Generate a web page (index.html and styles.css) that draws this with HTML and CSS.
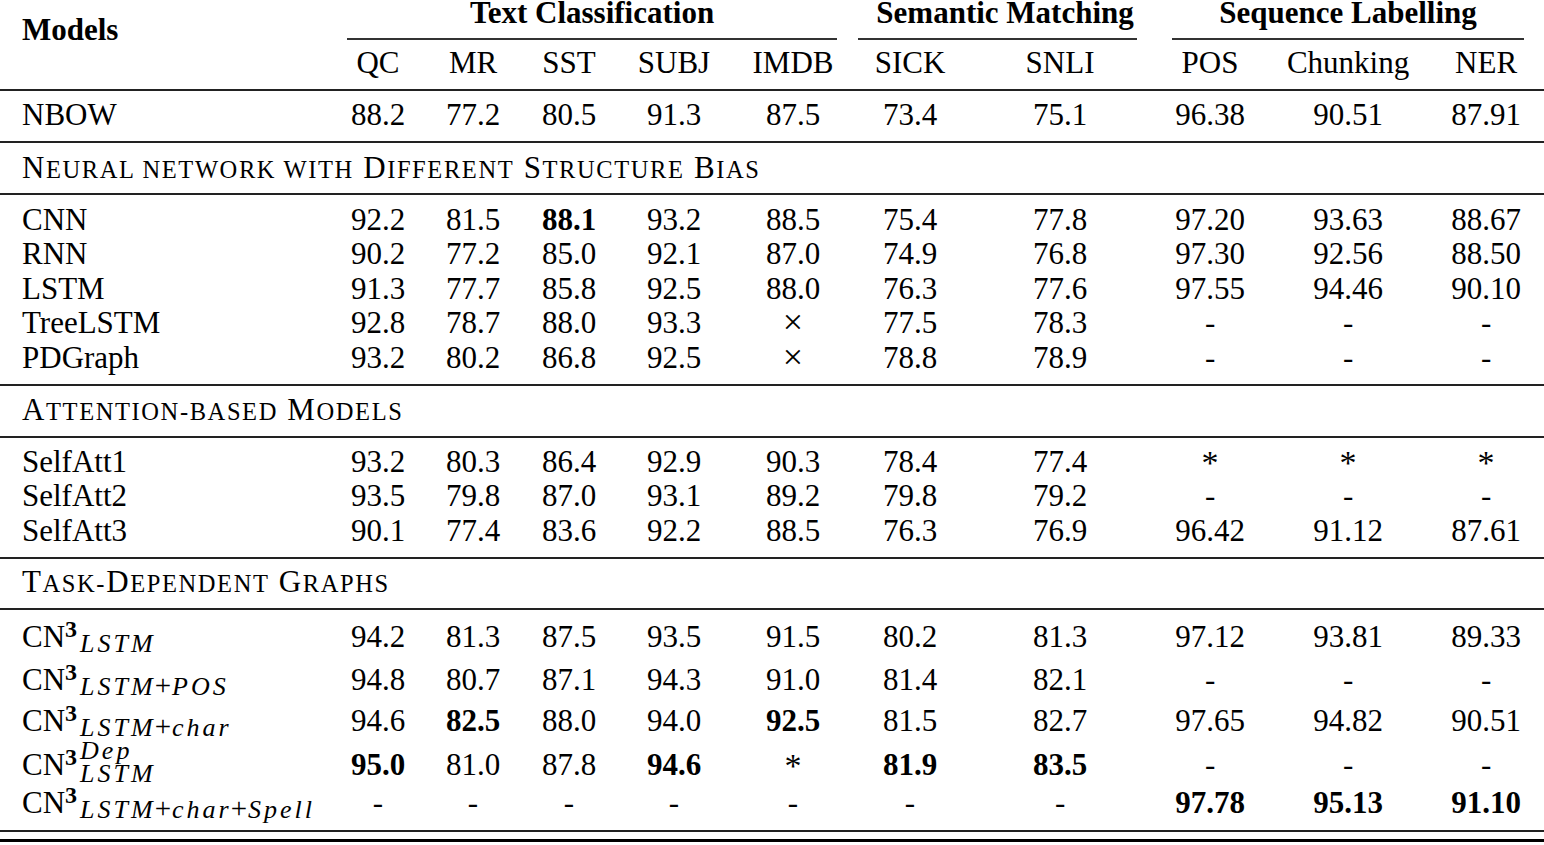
FILE: index.html
```html
<!DOCTYPE html>
<html>
<head>
<meta charset="utf-8">
<title>Results</title>
<link rel="stylesheet" href="styles.css">
</head>
<body>
<table class="results">
  <colgroup>
    <col class="c-model"><col class="c-qc"><col class="c-mr"><col class="c-sst"><col class="c-subj"><col class="c-imdb">
    <col class="c-sick"><col class="c-snli"><col class="c-pos"><col class="c-chunk"><col class="c-ner">
  </colgroup>
  <thead>
    <tr class="groups">
      <th rowspan="2" class="models">Models</th>
      <th colspan="5"><div class="grp grp-tc">Text Classification</div></th>
      <th colspan="2"><div class="grp grp-sm">Semantic Matching</div></th>
      <th colspan="3"><div class="grp grp-sl">Sequence Labelling</div></th>
    </tr>
    <tr class="cols">
      <th>QC</th><th>MR</th><th>SST</th><th>SUBJ</th><th>IMDB</th><th>SICK</th><th>SNLI</th><th>POS</th><th>Chunking</th><th class="last">NER</th>
    </tr>
  </thead>
  <tbody>
    <tr class="single">
      <td class="name">NBOW</td><td>88.2</td><td>77.2</td><td>80.5</td><td>91.3</td><td>87.5</td><td>73.4</td><td>75.1</td><td>96.38</td><td>90.51</td><td class="last">87.91</td>
    </tr>
    <tr class="section sec-a"><td colspan="11">N<span class="sc">eural network with</span> D<span class="sc">ifferent</span> S<span class="sc">tructure</span> B<span class="sc">ias</span></td></tr>
    <tr class="data tall first-a">
      <td class="name">CNN</td><td>92.2</td><td>81.5</td><td><b class="best">88.1</b></td><td>93.2</td><td>88.5</td><td>75.4</td><td>77.8</td><td>97.20</td><td>93.63</td><td class="last">88.67</td>
    </tr>
    <tr class="data">
      <td class="name">RNN</td><td>90.2</td><td>77.2</td><td>85.0</td><td>92.1</td><td>87.0</td><td>74.9</td><td>76.8</td><td>97.30</td><td>92.56</td><td class="last">88.50</td>
    </tr>
    <tr class="data tall">
      <td class="name">LSTM</td><td>91.3</td><td>77.7</td><td>85.8</td><td>92.5</td><td>88.0</td><td>76.3</td><td>77.6</td><td>97.55</td><td>94.46</td><td class="last">90.10</td>
    </tr>
    <tr class="data">
      <td class="name">TreeLSTM</td><td>92.8</td><td>78.7</td><td>88.0</td><td>93.3</td><td><span class="cross">&times;</span></td><td>77.5</td><td>78.3</td><td>-</td><td>-</td><td class="last">-</td>
    </tr>
    <tr class="data tall last-a">
      <td class="name">PDGraph</td><td>93.2</td><td>80.2</td><td>86.8</td><td>92.5</td><td><span class="cross">&times;</span></td><td>78.8</td><td>78.9</td><td>-</td><td>-</td><td class="last">-</td>
    </tr>
    <tr class="section sec-b"><td colspan="11">A<span class="sc">ttention-based</span> M<span class="sc">odels</span></td></tr>
    <tr class="data tall first-b">
      <td class="name">SelfAtt1</td><td>93.2</td><td>80.3</td><td>86.4</td><td>92.9</td><td>90.3</td><td>78.4</td><td>77.4</td><td><span class="ast">*</span></td><td><span class="ast">*</span></td><td class="last"><span class="ast">*</span></td>
    </tr>
    <tr class="data">
      <td class="name">SelfAtt2</td><td>93.5</td><td>79.8</td><td>87.0</td><td>93.1</td><td>89.2</td><td>79.8</td><td>79.2</td><td>-</td><td>-</td><td class="last">-</td>
    </tr>
    <tr class="data tall last-b">
      <td class="name">SelfAtt3</td><td>90.1</td><td>77.4</td><td>83.6</td><td>92.2</td><td>88.5</td><td>76.3</td><td>76.9</td><td>96.42</td><td>91.12</td><td class="last">87.61</td>
    </tr>
    <tr class="section sec-c"><td colspan="11">T<span class="sc">ask-</span>D<span class="sc">ependent</span> G<span class="sc">raphs</span></td></tr>
    <tr class="data cn1">
      <td class="name">CN<span class="cn-sup">3</span><span class="cn-sub">LSTM</span></td><td>94.2</td><td>81.3</td><td>87.5</td><td>93.5</td><td>91.5</td><td>80.2</td><td>81.3</td><td>97.12</td><td>93.81</td><td class="last">89.33</td>
    </tr>
    <tr class="data cn2">
      <td class="name">CN<span class="cn-sup">3</span><span class="cn-sub">LSTM<span class="op">+</span>POS</span></td><td>94.8</td><td>80.7</td><td>87.1</td><td>94.3</td><td>91.0</td><td>81.4</td><td>82.1</td><td>-</td><td>-</td><td class="last">-</td>
    </tr>
    <tr class="data cn3">
      <td class="name">CN<span class="cn-sup">3</span><span class="cn-sub">LSTM<span class="op">+</span>char</span></td><td>94.6</td><td><b class="best">82.5</b></td><td>88.0</td><td>94.0</td><td><b class="best">92.5</b></td><td>81.5</td><td>82.7</td><td>97.65</td><td>94.82</td><td class="last">90.51</td>
    </tr>
    <tr class="data cn4">
      <td class="name">CN<span class="cn-sup">3</span><span class="cn-stack"><span class="cn-line">Dep</span><span class="cn-line">LSTM</span></span></td><td><b class="best">95.0</b></td><td>81.0</td><td>87.8</td><td><b class="best">94.6</b></td><td><span class="ast">*</span></td><td><b class="best">81.9</b></td><td><b class="best">83.5</b></td><td>-</td><td>-</td><td class="last">-</td>
    </tr>
    <tr class="data cn5">
      <td class="name">CN<span class="cn-sup">3</span><span class="cn-sub">LSTM<span class="op">+</span>char<span class="op">+</span>Spell</span></td><td>-</td><td>-</td><td>-</td><td>-</td><td>-</td><td>-</td><td>-</td><td><b class="best">97.78</b></td><td><b class="best">95.13</b></td><td class="last"><b class="best">91.10</b></td>
    </tr>
  </tbody>
</table>
<div class="bottom-rule"></div>
</body>
</html>
```

FILE: styles.css
```css
html, body {
  margin: 0;
  padding: 0;
  background: #ffffff;
  overflow: hidden;
}

body {
  font-family: "Liberation Serif", "Times New Roman", Times, serif;
  font-size: 31px;
  color: #000000;
}

.results {
  border-collapse: separate;
  border-spacing: 0;
  table-layout: fixed;
  width: 1544px;
}

.c-model { width: 342px; }
.c-qc { width: 72px; }
.c-mr { width: 118px; }
.c-sst { width: 74px; }
.c-subj { width: 136px; }
.c-imdb { width: 102px; }
.c-sick { width: 132px; }
.c-snli { width: 168px; }
.c-pos { width: 132px; }
.c-chunk { width: 144px; }
.c-ner { width: 124px; }

.results th,
.results td {
  padding: 0;
  text-align: center;
  vertical-align: top;
  font-weight: normal;
  white-space: nowrap;
}

.results .name {
  text-align: left;
  padding-left: 22px;
}

.results .last {
  padding-left: 8px;
}

/* header */
.groups th {
  font-weight: bold;
}

.results .models {
  text-align: left;
  padding-left: 22px;
  padding-top: 15px;
  line-height: 30px;
  font-weight: bold;
  border-bottom: 2px solid #222;
}

.grp {
  height: 38px;
  line-height: 26px;
  border-bottom: 2px solid #333;
  font-weight: bold;
}

.grp-tc { margin: 0 7px 0 5px; }
.grp-sm { margin: 0 7px 0 14px; padding-left: 15px; }
.grp-sl { margin: 0 20px 0 28px; }

.cols th {
  padding-top: 8px;
  padding-bottom: 11px;
  line-height: 30px;
  border-bottom: 2px solid #222;
}

/* single row */
.single td {
  padding-top: 9px;
  padding-bottom: 11px;
  line-height: 30px;
  border-bottom: 2px solid #222;
}

/* section headers (small caps) */
.section td {
  text-align: left;
  padding-left: 22px;
  line-height: 30px;
  letter-spacing: 1.6px;
  border-bottom: 2px solid #222;
}

.sc {
  font-size: 24.5px;
  line-height: 0;
  text-transform: uppercase;
}

.sec-a td { padding-top: 10px; padding-bottom: 10px; }
.sec-b td { padding-top: 9px; padding-bottom: 11px; }
.sec-c td { padding-top: 8px; padding-bottom: 11px; }

/* data rows */
.data td {
  line-height: 34px;
}

.data.tall td {
  line-height: 35px;
}

.first-a td { padding-top: 7px; }
.last-a td { padding-bottom: 9px; border-bottom: 2px solid #222; }
.first-b td { padding-top: 6px; }
.last-b td { padding-bottom: 9px; border-bottom: 2px solid #222; }

.cn1 td { padding-top: 10px; }
.cn2 td { padding-top: 9px; }
.cn3 td { padding-top: 7px; }
.cn4 td { padding-top: 10px; }
.cn5 td { padding-top: 4px; padding-bottom: 10px; border-bottom: 2px solid #222; }

.best {
  font-weight: bold;
}

.ast {
  font-size: 34px;
  line-height: 0;
  vertical-align: -2px;
}

.cross {
  font-size: 36px;
  line-height: 0;
  vertical-align: -1px;
}

/* CN^3 labels */
.cn-sup {
  font-weight: bold;
  font-size: 24px;
  line-height: 0;
  vertical-align: 10px;
}

.cn-sub {
  font-style: italic;
  font-size: 26px;
  line-height: 0;
  vertical-align: -5px;
  letter-spacing: 3px;
  margin-left: 3px;
}

.op {
  font-style: normal;
  font-size: 29px;
  margin: 0 -2px 0 -1px;
}

.cn-stack {
  display: inline-block;
  vertical-align: -7px;
  line-height: 23px;
  margin: -12px 0 -4px 3px;
}

.cn-line {
  display: block;
  font-style: italic;
  font-size: 26px;
  letter-spacing: 3px;
}

.bottom-rule {
  margin-top: 7px;
  height: 3px;
  width: 1544px;
  background: #000000;
}
```
